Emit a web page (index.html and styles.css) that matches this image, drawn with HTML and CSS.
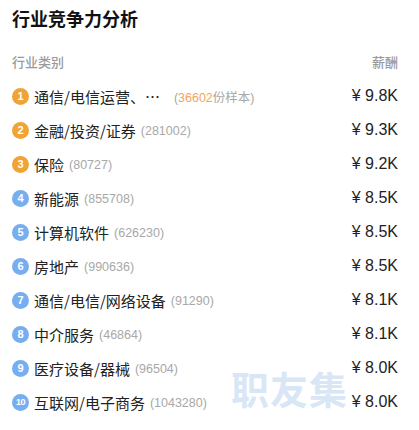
FILE: index.html
```html
<!DOCTYPE html>
<html lang="zh-CN">
<head>
  <meta charset="UTF-8">
  <title>行业竞争力分析</title>
  <link rel="stylesheet" href="styles.css">
</head>
<body>
  <div class="panel">
    <h2 class="title">行业竞争力分析</h2>
    <div class="head">
      <span>行业类别</span>
      <span>薪酬</span>
    </div>
    <ul class="list">
      <li class="row"><span class="rank top">1</span><span class="name">通信/电信运营、…</span><span class="count first">(<em>36602</em>份样本)</span><span class="pay">¥ 9.8K</span></li>
      <li class="row"><span class="rank top">2</span><span class="name">金融/投资/证券</span><span class="count">(281002)</span><span class="pay">¥ 9.3K</span></li>
      <li class="row"><span class="rank top">3</span><span class="name">保险</span><span class="count">(80727)</span><span class="pay">¥ 9.2K</span></li>
      <li class="row"><span class="rank">4</span><span class="name">新能源</span><span class="count">(855708)</span><span class="pay">¥ 8.5K</span></li>
      <li class="row"><span class="rank">5</span><span class="name">计算机软件</span><span class="count">(626230)</span><span class="pay">¥ 8.5K</span></li>
      <li class="row"><span class="rank">6</span><span class="name">房地产</span><span class="count">(990636)</span><span class="pay">¥ 8.5K</span></li>
      <li class="row"><span class="rank">7</span><span class="name">通信/电信/网络设备</span><span class="count">(91290)</span><span class="pay">¥ 8.1K</span></li>
      <li class="row"><span class="rank">8</span><span class="name">中介服务</span><span class="count">(46864)</span><span class="pay">¥ 8.1K</span></li>
      <li class="row"><span class="rank">9</span><span class="name">医疗设备/器械</span><span class="count">(96504)</span><span class="pay">¥ 8.0K</span></li>
      <li class="row"><span class="rank small">10</span><span class="name">互联网/电子商务</span><span class="count">(1043280)</span><span class="pay">¥ 8.0K</span></li>
    </ul>
    <div class="mark">职友集</div>
  </div>
</body>
</html>
```

FILE: styles.css
```css
body {
  margin: 0;
  background: #ffffff;
  font-family: 'Noto Sans CJK SC', 'Noto Sans', sans-serif;
  color: #222222;
}

.panel {
  position: relative;
  width: 419px;
  height: 430px;
  padding: 6px 21px 0 12px;
  box-sizing: border-box;
  overflow: hidden;
}

.title {
  margin: 0;
  font-size: 18px;
  line-height: 24px;
  font-weight: 700;
  color: #111111;
}

.head {
  display: flex;
  justify-content: space-between;
  margin-top: 22px;
  font-size: 13px;
  line-height: 20px;
  font-weight: 500;
  color: #9a9a9a;
}

.list {
  list-style: none;
  margin: 7px 0 0;
  padding: 0;
  position: relative;
  z-index: 1;
}

.row {
  display: flex;
  align-items: center;
  height: 34px;
}

.rank {
  display: flex;
  align-items: center;
  justify-content: center;
  width: 17px;
  height: 17px;
  border-radius: 50%;
  background: #77aef0;
  color: #ffffff;
  font-family: 'Liberation Sans', Arial, sans-serif;
  font-size: 11px;
  font-weight: 700;
  flex-shrink: 0;
}

.rank.top {
  background: #f0a434;
}

.rank.small {
  font-size: 9px;
  letter-spacing: -0.5px;
}

.name {
  margin-left: 5px;
  font-size: 15px;
  color: #222222;
}

.count {
  margin-left: 5px;
  margin-top: 1px;
  font-family: 'Liberation Sans', 'Noto Sans CJK SC', sans-serif;
  font-size: 12.5px;
  color: #a8a8a8;
}

.count em {
  font-style: normal;
  color: #f0a65a;
}

.count.first {
  margin-left: 14px;
}

.pay {
  margin-left: auto;
  font-family: 'Liberation Sans', Arial, sans-serif;
  font-size: 16px;
  color: #222222;
}

.mark {
  position: absolute;
  left: 231px;
  top: 364px;
  font-size: 38px;
  line-height: 48px;
  font-weight: 700;
  color: #d9e6f6;
  letter-spacing: 1px;
}
```
